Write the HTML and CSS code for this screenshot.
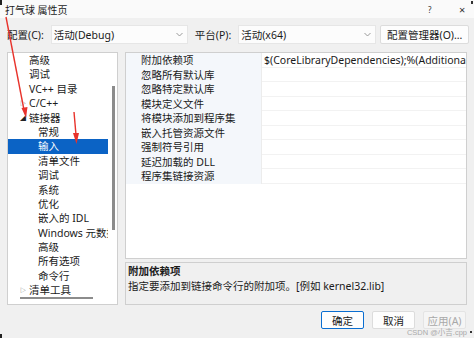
FILE: index.html
```html
<!DOCTYPE html>
<html lang="zh-CN">
<head>
  <meta charset="UTF-8" />
  <title>打气球 属性页</title>
  <link rel="stylesheet" href="styles.css">
</head>
<body>
  <div class="dialog">
    <div class="titlebar">
      <span class="title">打气球 属性页</span>
      <span class="help">?</span>
      <span class="close">×</span>
    </div>

    <div class="toolbar">
      <span class="label">配置(C):</span>
      <div class="combo combo-config">
        <span>活动(Debug)</span>
        <svg class="chev" width="7" height="5" viewBox="0 0 7 5"><path d="M0.5 1 L3.5 4 L6.5 1" fill="none" stroke="#909090" stroke-width="0.9"/></svg>
      </div>
      <span class="label">平台(P):</span>
      <div class="combo combo-platform">
        <span>活动(x64)</span>
        <svg class="chev" width="7" height="5" viewBox="0 0 7 5"><path d="M0.5 1 L3.5 4 L6.5 1" fill="none" stroke="#909090" stroke-width="0.9"/></svg>
      </div>
      <button class="btn btn-mgr">配置管理器(O)...</button>
    </div>

    <div class="main">
      <div class="tree">
        <ul class="tree-list">
          <li class="lv1">高级</li>
          <li class="lv1">调试</li>
          <li class="lv1">VC++ 目录</li>
          <li class="lv1"><span class="exp">▷</span>C/C++</li>
          <li class="lv1"><span class="exp open">◢</span>链接器</li>
          <li class="lv2">常规</li>
          <li class="lv2 selected">输入</li>
          <li class="lv2">清单文件</li>
          <li class="lv2">调试</li>
          <li class="lv2">系统</li>
          <li class="lv2">优化</li>
          <li class="lv2">嵌入的 IDL</li>
          <li class="lv2">Windows 元数据</li>
          <li class="lv2">高级</li>
          <li class="lv2">所有选项</li>
          <li class="lv2">命令行</li>
          <li class="lv1"><span class="exp">▷</span>清单工具</li>
        </ul>
        <div class="vscroll"></div>
        <div class="hscroll-area"><div class="hscroll"></div></div>
      </div>

      <div class="right">
        <div class="grid">
          <div class="row"><div class="name">附加依赖项</div><div class="value">$(CoreLibraryDependencies);%(AdditionalDependencies)</div></div>
          <div class="row"><div class="name">忽略所有默认库</div><div class="value"></div></div>
          <div class="row"><div class="name">忽略特定默认库</div><div class="value"></div></div>
          <div class="row"><div class="name">模块定义文件</div><div class="value"></div></div>
          <div class="row"><div class="name">将模块添加到程序集</div><div class="value"></div></div>
          <div class="row"><div class="name">嵌入托管资源文件</div><div class="value"></div></div>
          <div class="row"><div class="name">强制符号引用</div><div class="value"></div></div>
          <div class="row"><div class="name">延迟加载的 DLL</div><div class="value"></div></div>
          <div class="row"><div class="name">程序集链接资源</div><div class="value"></div></div>
        </div>
        <div class="desc">
          <div class="desc-title">附加依赖项</div>
          <div class="desc-text">指定要添加到链接命令行的附加项。[例如 kernel32.lib]</div>
        </div>
      </div>
    </div>

    <div class="footer">
      <button class="btn btn-ok">确定</button>
      <button class="btn">取消</button>
      <button class="btn btn-disabled">应用(A)</button>
      <span class="watermark">CSDN @小吉.cpp</span>
    </div>

    <!-- red annotation arrows drawn over the dialog -->
    <svg class="marks" width="474" height="338" viewBox="0 0 474 338">
      <line x1="6" y1="17" x2="24" y2="110" stroke="#e8322b" stroke-width="1.4"/>
      <path d="M21.5 108 L27.5 107 L26 118 Z" fill="#e8322b"/>
      <line x1="74" y1="112" x2="76" y2="135" stroke="#e8322b" stroke-width="1.4"/>
      <path d="M73 133 L79 133 L76.5 144 Z" fill="#e8322b"/>
      <rect x="0" y="0" width="2" height="5" fill="#222"/>
      <rect x="471" y="1" width="2" height="3" fill="#333"/>
      <rect x="0" y="334" width="2" height="4" fill="#222"/>
      <rect x="470" y="331" width="2" height="2" fill="#333"/>
    </svg>
  </div>
</body>
</html>
```

FILE: styles.css
```css
* {
  box-sizing: border-box;
}

body {
  margin: 0;
  background: #f0f0f0;
  font-family: "Segoe UI", "Noto Sans", "Noto Sans CJK SC", sans-serif;
  font-size: 10px;
  color: #1a1a1a;
}

.dialog {
  position: relative;
  width: 474px;
  height: 338px;
  overflow: hidden;
}

.titlebar {
  height: 18px;
  background: #fafafa;
  display: flex;
  align-items: center;
  padding: 0 5px;
  font-size: 10px;
}

.title {
  flex: 1;
}

.help {
  font-size: 8px;
  width: 31px;
  color: #333;
}

.close {
  font-size: 11px;
  width: 10px;
  color: #333;
}

.toolbar {
  display: flex;
  align-items: center;
  margin-top: 7px;
  height: 19px;
  padding-left: 7px;
  font-size: 10.5px;
}

.label {
  white-space: nowrap;
}

.combo {
  display: flex;
  align-items: center;
  justify-content: space-between;
  height: 19px;
  background: #fcfcfc;
  border: 1px solid #e6e6e6;
  padding: 0 4px 0 2px;
}

.combo-config {
  width: 137px;
  margin-left: 7px;
  margin-right: 7px;
}

.combo-platform {
  width: 138px;
  margin-left: 7px;
}

.btn {
  font-family: inherit;
  font-size: 10.5px;
  height: 19px;
  background: #fdfdfd;
  border: 1px solid #dcdcdc;
  border-radius: 2px;
  color: #1a1a1a;
  padding: 0;
}

.btn-mgr {
  width: 89px;
  margin-left: 4px;
}

.main {
  display: flex;
  gap: 7px;
  margin-top: 8px;
  padding: 0 7px;
  height: 253px;
}

.tree {
  position: relative;
  flex-shrink: 0;
  width: 111px;
  background: #fff;
  border: 1px solid #cfcfcf;
  display: flex;
  flex-direction: column;
}

.tree-list {
  list-style: none;
  margin: 0;
  padding: 0;
  height: 242px;
  overflow: hidden;
  font-size: 10.5px;
}

.tree-list li {
  position: relative;
  height: 14.4px;
  line-height: 14.4px;
  width: 100px;
  white-space: nowrap;
  overflow: hidden;
}

.lv1 {
  padding-left: 21px;
}

.lv2 {
  padding-left: 30px;
}

.exp {
  position: absolute;
  left: 12px;
  font-size: 6px;
  color: #555;
}

.exp.open {
  color: #222;
}

.tree-list .selected {
  background: #0b63c5;
  color: #fff;
}

.vscroll {
  position: absolute;
  right: 2px;
  top: 33px;
  width: 3px;
  height: 144px;
  background: #8c8c8c;
}

.hscroll-area {
  flex: 1;
  position: relative;
}

.hscroll {
  margin: 2px 0 0 12px;
  width: 73px;
  height: 2px;
  background: #8c8c8c;
}

.right {
  flex: 1;
  min-width: 0;
  display: flex;
  flex-direction: column;
  gap: 3px;
}

.grid {
  height: 207px;
  background: #fff;
  border: 1px solid #cfcfcf;
  font-size: 10.5px;
  overflow: hidden;
}

.row {
  display: flex;
  height: 14.5px;
  line-height: 14.5px;
}

.name {
  width: 136px;
  flex-shrink: 0;
  background: #f4f7fb;
  padding-left: 15px;
  white-space: nowrap;
  border-right: 1px solid #ececec;
}

.value {
  flex: 1;
  min-width: 0;
  padding-left: 2px;
  white-space: nowrap;
  overflow: hidden;
  border-bottom: 1px solid #f2f2f2;
}

.desc {
  height: 43px;
  border: 1px solid #cfcfcf;
  padding: 1px 2px;
  font-size: 10.5px;
  line-height: 15px;
}

.desc-title {
  font-weight: bold;
}

.footer {
  position: relative;
  display: flex;
  gap: 8px;
  margin-top: 6px;
  padding-left: 321px;
}

.footer .btn {
  width: 43px;
  height: 18px;
}

.btn-ok {
  border: 1px solid #0a6ed1;
}

.btn.btn-disabled {
  color: #a8a8a8;
  background: #f5f5f5;
  border-color: #e4e4e4;
}

.watermark {
  position: absolute;
  right: 7px;
  top: 15px;
  font-size: 7.5px;
  color: #aaaaaa;
  font-family: "Liberation Sans", "Noto Sans CJK SC", sans-serif;
}

.marks {
  position: absolute;
  left: 0;
  top: 0;
  pointer-events: none;
}
```
